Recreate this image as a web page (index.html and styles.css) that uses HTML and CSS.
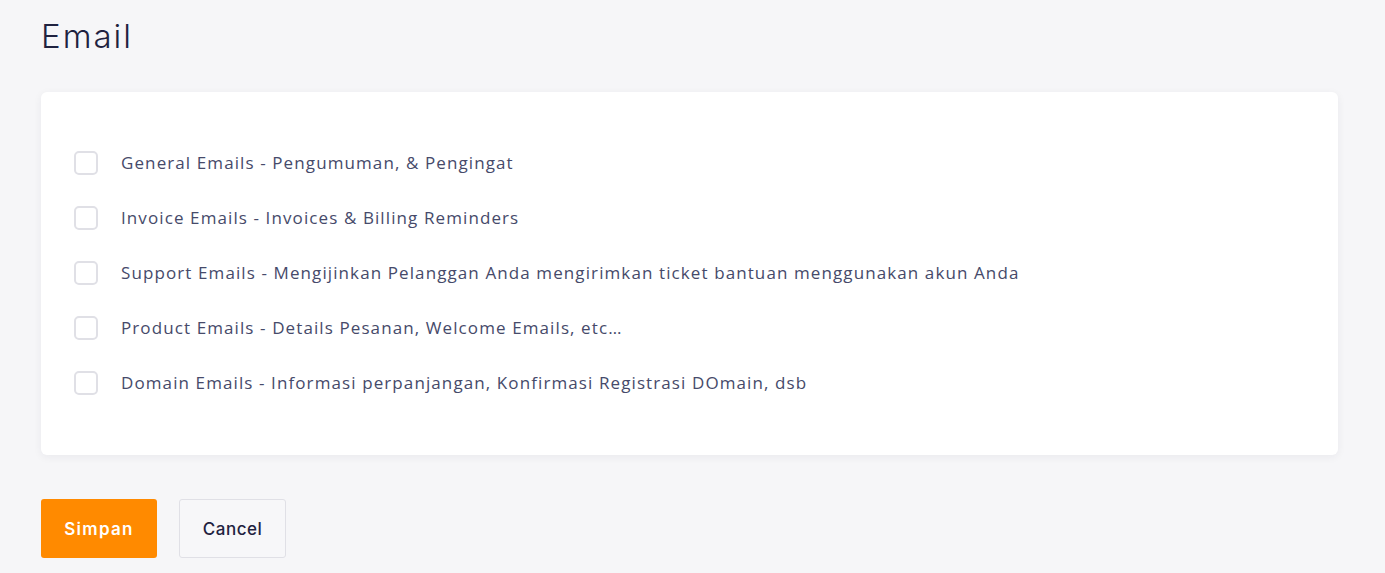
FILE: index.html
```html
<!DOCTYPE html>
<html lang="id">

<head>
  <meta charset="UTF-8" />
  <meta name="viewport" content="width=device-width, initial-scale=1.0" />
  <title>Email</title>
  <link rel="stylesheet" href="styles.css">
</head>

<body>
  <section class="page">
    <h1 class="title">Email</h1>

    <div class="card">
      <label class="row"><input type="checkbox" /> <span>General Emails - Pengumuman, &amp; Pengingat</span></label>
      <label class="row"><input type="checkbox" /> <span>Invoice Emails - Invoices &amp; Billing Reminders</span></label>
      <label class="row"><input type="checkbox" /> <span>Support Emails - Mengijinkan Pelanggan Anda mengirimkan ticket bantuan menggunakan akun Anda</span></label>
      <label class="row"><input type="checkbox" /> <span>Product Emails - Details Pesanan, Welcome Emails, etc&hellip;</span></label>
      <label class="row"><input type="checkbox" /> <span>Domain Emails - Informasi perpanjangan, Konfirmasi Registrasi DOmain, dsb</span></label>
    </div>

    <div class="actions">
      <button class="btn btn-primary">Simpan</button>
      <button class="btn btn-default">Cancel</button>
    </div>
  </section>
</body>

</html>
```

FILE: styles.css
```css
html,
body {
  margin: 0;
  height: 100%;
  overflow: hidden;
}

body {
  background-color: #f6f6f8;
  font-family: "Inter", "Noto Sans", sans-serif;
  color: #464a6a;
}

.page {
  padding: 14px 47px 0 41px;
}

.title {
  margin: 0;
  font-size: 33px;
  font-weight: 300;
  line-height: 44px;
  letter-spacing: 2px;
  color: #1f2240;
}

.card {
  margin-top: 34px;
  background-color: #fff;
  border-radius: 6px;
  box-shadow: 0 2px 8px rgba(30, 30, 60, 0.06);
  padding: 43px 33px 45px;
}

.row {
  display: flex;
  align-items: center;
  height: 55px;
  font-family: "Open Sans", sans-serif;
  font-size: 17px;
  letter-spacing: 1.1px;
}

.row input {
  appearance: none;
  width: 24px;
  height: 24px;
  margin: 0 23px 0 0;
  border: 2px solid #e0e0e6;
  border-radius: 5px;
  background-color: #fff;
}

.actions {
  display: flex;
  gap: 22px;
  margin-top: 44px;
}

.btn {
  height: 59px;
  padding: 0;
  font-family: inherit;
  font-size: 17px;
  border-radius: 3px;
}

.btn-primary {
  width: 116px;
  border: none;
  background-color: #ff8a00;
  color: #fff;
  font-weight: 600;
  letter-spacing: 1.3px;
}

.btn-default {
  width: 107px;
  border: 1px solid #e0e0e6;
  background-color: #f7f7f9;
  color: #1f2240;
  font-weight: 500;
  letter-spacing: 0.5px;
}
```
